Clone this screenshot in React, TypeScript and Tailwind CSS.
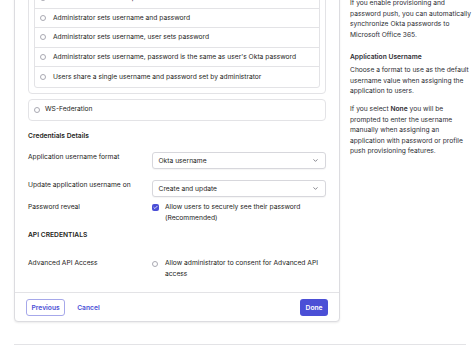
import React from "react";
import { ChevronDown, Check } from "lucide-react";

const Radio = () => (
  <span className="block w-[6px] h-[6px] rounded-full border border-[#a9a9b2] bg-white shrink-0" />
);

const schemes = [
  "User sets username and password",
  "Administrator sets username and password",
  "Administrator sets username, user sets password",
  "Administrator sets username, password is the same as user's Okta password",
  "Users share a single username and password set by administrator",
];

const Select = ({ value }: { value: string }) => (
  <div className="flex items-center justify-between h-[17px] w-[174px] border border-[#d7d7dc] rounded-[3px] pl-[5.5px] pr-[6px] bg-white shadow-[0_1px_1px_rgba(0,0,0,0.04)]">
    <span>{value}</span>
    <ChevronDown size={7} strokeWidth={2.5} className="text-[#5c5c66]" />
  </div>
);

export default function App() {
  return (
    <div className="w-[474px] h-[350px] overflow-hidden bg-white font-['Inter',sans-serif] text-[6.7px] leading-[10.5px] text-[#1d1d21]">
      <div className="flex">
        <div className="pl-[14px] w-[340px] shrink-0">
          <div className="-mt-[33px] border border-[#dcdce0] rounded-[4px] shadow-[0_1px_2px_rgba(0,0,0,0.08)] bg-white">
            <div className="px-[13px] pt-[14px] pb-[13px]">
              <div className="border border-[#e3e3e6] rounded-[4px] p-[5px]">
                <div className="border border-[#e3e3e6] rounded-[3px] divide-y divide-[#e3e3e6]">
                  {schemes.map((s) => (
                    <div key={s} className="flex items-center gap-[7px] h-[19.5px] pl-[5px]">
                      <Radio />
                      <span>{s}</span>
                    </div>
                  ))}
                </div>
              </div>

              <div className="mt-[5px] flex items-center gap-[5px] h-[22px] pl-[5px] border border-[#e3e3e6] rounded-[4px]">
                <Radio />
                <span>WS-Federation</span>
              </div>

              <div className="mt-[10.75px] font-semibold">Credentials Details</div>

              <div className="mt-[10.5px] flex items-start">
                <div className="w-[124px]">Application username format</div>
                <Select value="Okta username" />
              </div>

              <div className="mt-[11px] flex items-start">
                <div className="w-[124px]">Update application username on</div>
                <Select value="Create and update" />
              </div>

              <div className="mt-[5px] flex items-start">
                <div className="w-[124px]">Password reveal</div>
                <div className="flex items-start gap-[6px] flex-1">
                  <span className="mt-[1.75px] flex items-center justify-center w-[7px] h-[7px] rounded-[2px] bg-[#4b4fd6] shrink-0">
                    <Check size={5} strokeWidth={4} className="text-white" />
                  </span>
                  <span>
                    Allow users to securely see their password
                    <br />
                    (Recommended)
                  </span>
                </div>
              </div>

              <div className="mt-[7px] font-semibold">API CREDENTIALS</div>

              <div className="mt-[17.5px] flex items-start">
                <div className="w-[124px]">Advanced API Access</div>
                <div className="flex items-start gap-[7px] flex-1">
                  <span className="mt-[2.25px]">
                    <Radio />
                  </span>
                  <span className="flex-1">
                    Allow administrator to consent for Advanced API access
                  </span>
                </div>
              </div>
            </div>

            <div className="border-t border-[#e3e3e6] flex items-center justify-between pl-[11px] pr-[11px] pt-[6px] pb-[5px]">
              <div className="flex items-center gap-[12px]">
                <button className="h-[17px] px-[4.5px] border border-[#a6a8ea] rounded-[3px] text-[#4b4fd6] font-semibold">
                  Previous
                </button>
                <button className="text-[#4b4fd6] font-semibold">Cancel</button>
              </div>
              <button className="h-[17px] px-[5.5px] rounded-[3px] bg-[#4b4fd6] text-white font-semibold">
                Done
              </button>
            </div>
          </div>
        </div>

        <div className="ml-[10px] w-[124px] -mt-[2px] text-[#2d2d33]">
          <p>
            If you enable provisioning and
            <br />
            password push, you can automatically
            <br />
            synchronize Okta passwords to
            <br />
            Microsoft Office 365.
          </p>
          <p className="mt-[12px] font-semibold">Application Username</p>
          <p className="mt-[2.5px]">
            Choose a format to use as the default
            <br />
            username value when assigning the
            <br />
            application to users.
          </p>
          <p className="mt-[7.5px]">
            If you select <span className="font-semibold">None</span> you will be
            <br />
            prompted to enter the username
            <br />
            manually when assigning an
            <br />
            application with password or profile
            <br />
            push provisioning features.
          </p>
        </div>
      </div>

      <div className="ml-[14px] w-[452px] mt-[22px] border-t border-[#e3e3e6] pt-[5px] text-[#8c8c96] text-[6px]">
        © 2024 Okta, Inc. Privacy Status site OK14 US Cell Version 2024.01.1 E Download Okta Plugin Feedback
      </div>
    </div>
  );
}
